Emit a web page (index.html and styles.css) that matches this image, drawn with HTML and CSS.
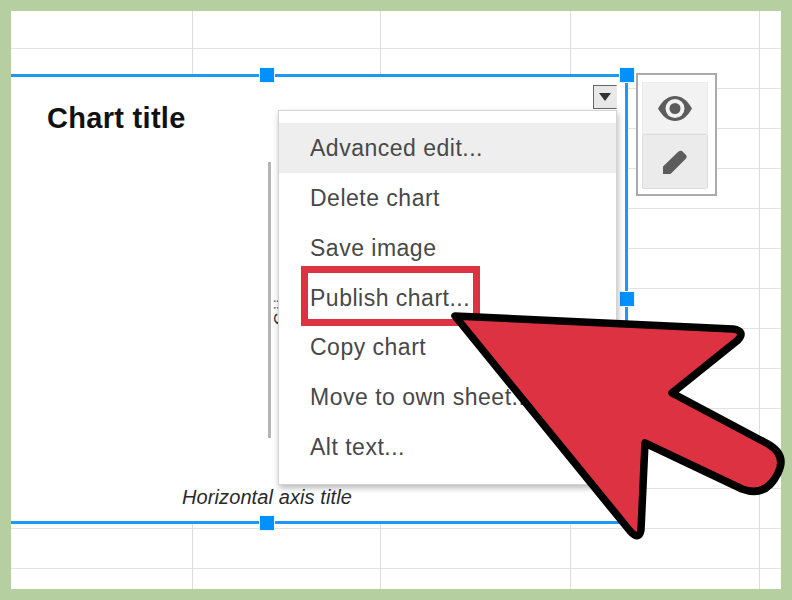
FILE: index.html
```html
<!DOCTYPE html>
<html lang="en">
<head>
<meta charset="utf-8">
<title>Publish chart</title>
<link rel="stylesheet" href="styles.css">
</head>
<body>
<main class="sheet">
  <section class="chart">
    <h1 class="chart-title">Chart title</h1>
    <p class="axis-title">Horizontal axis title</p>
    <span class="handle handle-top"></span>
    <span class="handle handle-corner"></span>
    <span class="handle handle-right"></span>
    <span class="handle handle-bottom"></span>
    <span class="axis-line"></span>
    <span class="axis-label">Cii</span>
    <button class="dropdown" aria-label="Chart menu"><span class="caret"></span></button>
  </section>
  <ul class="menu">
    <li class="item item-active">Advanced edit...</li>
    <li class="item">Delete chart</li>
    <li class="item">Save image</li>
    <li class="item">Publish chart...</li>
    <li class="item">Copy chart</li>
    <li class="item">Move to own sheet...</li>
    <li class="item">Alt text...</li>
  </ul>
  <span class="callout"></span>
  <div class="toolbar">
    <div class="tool">
      <svg class="icon-eye" viewBox="0 0 34 25">
        <path d="M0 12.5C5 3.5 11 0 17 0s12 3.500 17 12.500C29 21.500 23 25 17 25S5 21.500 0 12.500Z"/>
        <circle class="eye-ring" cx="17" cy="12.500" r="9.500"/>
        <circle cx="17" cy="12.500" r="5.500"/>
      </svg>
    </div>
    <div class="tool tool-on">
      <svg class="icon-pencil" viewBox="0 0 24 24">
        <path d="M0 24V16.500L15 2Q17 0 19 1L23 5Q24.500 7 22.500 9L7.500 24Z"/>
      </svg>
    </div>
  </div>
</main>
<svg class="arrow" viewBox="0 0 792 600">
  <path d="M455 316 L733 329 Q746 331 738 340 L672 393 L768 444 Q787 455 778 473 Q766 498 742 489 L645 443 L641 530 Q639 541 630 531 Z"/>
</svg>
</body>
</html>
```
FILE: styles.css
```css
* { box-sizing: border-box; }
html, body { margin: 0; padding: 0; }
body {
  width: 792px;
  height: 600px;
  overflow: hidden;
  position: relative;
  background: #b5cfa1;
  padding: 11px;
  font-family: "Liberation Sans", Arial, sans-serif;
}
.sheet {
  position: relative;
  width: 770px;
  height: 578px;
  padding-top: 63px;
  background-color: #fff;
  background-image:
    linear-gradient(#dcdcdc, #dcdcdc),
    linear-gradient(#dcdcdc, #dcdcdc),
    linear-gradient(#dcdcdc, #dcdcdc),
    linear-gradient(#dcdcdc, #dcdcdc),
    linear-gradient(#e2e2e2 1px, transparent 1px);
  background-size: 1px 100%, 1px 100%, 1px 100%, 1px 100%, 100% 40px;
  background-position: 181px 0, 369px 0, 559px 0, 748px 0, 0 37px;
  background-repeat: no-repeat, no-repeat, no-repeat, no-repeat, repeat-y;
}
.chart {
  position: relative;
  width: 617px;
  height: 450px;
  display: flex;
  flex-direction: column;
  justify-content: space-between;
  background: #fff;
  border-top: 3px solid #1f97f4;
  border-right: 3px solid #1f97f4;
  border-bottom: 3px solid #1f97f4;
  padding: 23px 0 14px 36px;
}
.chart-title {
  margin: 0;
  font-size: 29px;
  line-height: 36px;
  font-weight: 700;
  letter-spacing: .3px;
  color: #111;
}
.axis-title {
  margin: 0 0 0 135px;
  font-size: 20px;
  line-height: 20px;
  font-style: italic;
  letter-spacing: .1px;
  color: #2a2a2a;
}
.handle {
  position: absolute;
  width: 16px;
  height: 16px;
  background: #0091ff;
  border: 1px solid #e8f4ff;
}
.handle-top { left: 248px; top: -10px; }
.handle-corner { right: -10px; top: -10px; }
.handle-right { right: -10px; top: 214px; }
.handle-bottom { left: 248px; bottom: -10px; }
.axis-line {
  position: absolute;
  left: 257px;
  top: 85px;
  width: 3px;
  height: 276px;
  background: #b4b4b4;
}
.axis-label {
  position: absolute;
  left: 255px;
  top: 223px;
  width: 30px;
  height: 20px;
  font-size: 17px;
  line-height: 20px;
  letter-spacing: 3px;
  color: #333;
  white-space: nowrap;
  transform: rotate(-90deg);
}
.dropdown {
  position: absolute;
  left: 582px;
  top: 8px;
  width: 24px;
  height: 24px;
  padding: 0;
  display: flex;
  align-items: center;
  justify-content: center;
  background: #e8e8e8;
  border: 1px solid #666;
  border-right-color: #e8e8e8;
}
.caret {
  width: 0;
  height: 0;
  border-left: 6px solid transparent;
  border-right: 6px solid transparent;
  border-top: 8px solid #333;
}
.menu {
  position: absolute;
  left: 267px;
  top: 99px;
  width: 339px;
  height: 375px;
  margin: 0;
  padding: 12px 0 0;
  list-style: none;
  background: #fff;
  border: 1px solid #d4d4d4;
  box-shadow: 1px 3px 6px rgba(0, 0, 0, .28);
}
.item {
  height: 49.85px;
  padding-left: 31px;
  font-size: 23px;
  line-height: 50px;
  letter-spacing: .5px;
  color: #484848;
  white-space: nowrap;
}
.item-active { background: #eee; }
.callout {
  position: absolute;
  left: 290px;
  top: 255px;
  width: 179px;
  height: 60px;
  border: 7px solid #dc3242;
}
.toolbar {
  position: absolute;
  left: 625px;
  top: 62px;
  width: 81px;
  height: 123px;
  padding: 7px 7px 0 4px;
  background: #fff;
  border: 2px solid #aaa;
}
.tool {
  height: 52px;
  display: flex;
  align-items: center;
  justify-content: center;
  background: #f2f2f2;
  border: 1px solid #ebebeb;
}
.tool-on {
  height: 55px;
  background: #ebebeb;
  border: 1px solid #dcdcdc;
  border-radius: 2px;
}
.icon-eye { width: 34px; height: 25px; fill: #5c5c5c; }
.eye-ring { fill: #f2f2f2; }
.icon-pencil { width: 24px; height: 24px; fill: #5c5c5c; }
.arrow {
  position: absolute;
  left: 0;
  top: 0;
  width: 792px;
  height: 600px;
  fill: #dc3242;
  stroke: #000;
  stroke-width: 7.5;
  stroke-linejoin: round;
}
```
